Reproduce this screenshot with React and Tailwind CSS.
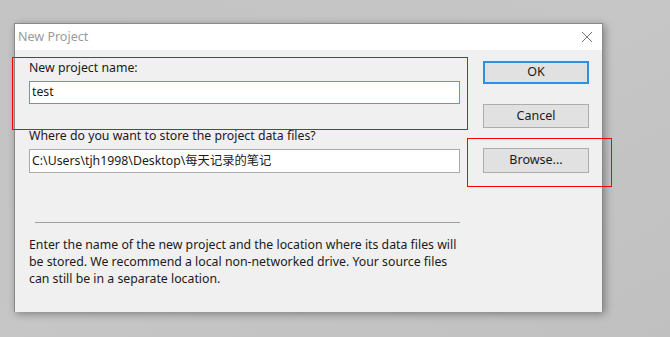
export default function App() {
  const font = { fontFamily: '"Noto Sans", "Noto Sans CJK SC", sans-serif' };
  return (
    <div className="relative w-[670px] h-[337px] overflow-hidden bg-gradient-to-br from-[#c4c4c4] via-[#c6c6c6] to-[#c0c0c0] pt-[23px] pl-[14px]" style={font}>
      <div className="w-[589px] h-[289px] bg-[#f0f0f0] border-t border-l border-r border-[#8a8a8a] shadow-[2px_2px_8px_rgba(0,0,0,0.35)] flex flex-col">
        <div className="h-[26px] bg-white flex items-center justify-between pl-[3px] pr-[9px] shrink-0">
          <span className="text-[12.5px] text-[#9a9a9a]">New Project</span>
          <svg width="12" height="12" viewBox="0 0 12 12"><path d="M1 1L11 11M11 1L1 11" stroke="#777" strokeWidth="1" /></svg>
        </div>
        <div className="flex pl-[14px] pt-[8px]">
          <div className="w-[431px] flex flex-col">
            <div className="text-[12.3px] text-[#1a1a1a] leading-[17px] pt-[1px]">New project name:</div>
            <div className="mt-[5px] h-[23px] bg-white border border-[#4a9ee6] flex items-center pl-[2px] text-[12.3px] text-[#1a1a1a]">test</div>
            <div className="mt-[23px] text-[12.3px] text-[#1a1a1a] leading-[17px]">Where do you want to store the project data files?</div>
            <div className="mt-[5px] h-[24px] bg-white border border-[#ababab] flex items-center pl-[2px] text-[12.3px] text-[#1a1a1a]">C:\Users\tjh1998\Desktop\每天记录的笔记</div>
            <div className="mt-[49px] ml-[6px] w-[425px] h-px bg-[#a0a0a0]"></div>
            <p className="mt-[13px] text-[12.3px] text-[#1a1a1a] leading-[17px]">Enter the name of the new project and the location where its data files will be stored. We recommend a local non-networked drive. Your source files can still be in a separate location.</p>
          </div>
          <div className="ml-[23px] mt-[3px] flex flex-col gap-[20px]">
            <button className="w-[106px] h-[23px] bg-[#e1e1e1] border-2 border-[#2f8fe0] text-[12.5px] text-[#1a1a1a] flex items-center justify-center">OK</button>
            <button className="w-[106px] h-[24px] bg-[#e1e1e1] border border-[#adadad] text-[12.5px] text-[#1a1a1a] flex items-center justify-center">Cancel</button>
            <button className="w-[106px] h-[25px] bg-[#e1e1e1] border border-[#adadad] text-[12.5px] text-[#1a1a1a] flex items-center justify-center">Browse...</button>
          </div>
        </div>
      </div>
      <div className="absolute left-[12px] top-[57px] w-[456px] h-[73px] border border-[#ff0000]"></div>
      <div className="absolute left-[467px] top-[138px] w-[145px] h-[49px] border border-[#ff0000]"></div>
    </div>
  );
}
